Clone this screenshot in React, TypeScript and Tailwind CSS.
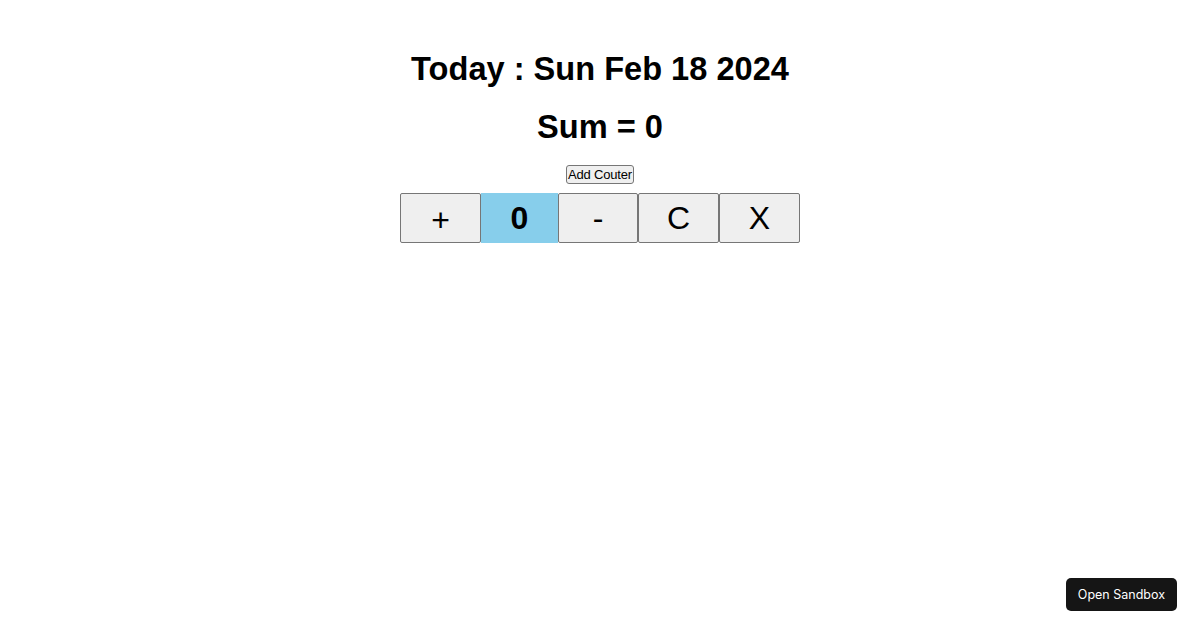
import React, { useState } from 'react';

const cellBtn =
  'h-[50px] bg-[#efefef] border border-[#767676] rounded-[2px] text-[32px] leading-none text-black flex items-center justify-center';

const App: React.FC = () => {
  const [count, setCount] = useState(0);

  return (
    <div className="relative w-[1200px] h-[630px] bg-white font-['Liberation_Sans',Arial,sans-serif] text-black">
      <div className="flex flex-col items-center pt-[50px]">
        <h1 className="text-[32.6px] leading-[37px] font-bold">Today : Sun Feb 18 2024</h1>
        <h1 className="mt-[21px] text-[32.6px] leading-[37px] font-bold">Sum = {count}</h1>
        <button className="mt-[20px] h-[19px] px-[1px] bg-[#efefef] border border-[#767676] rounded-[3px] text-[13px] leading-none tracking-[-0.2px]">
          Add Couter
        </button>
        <div className="mt-[9px] flex">
          <button className={`${cellBtn} w-[81px] pt-[4px]`} onClick={() => setCount(c => c + 1)}>
            +
          </button>
          <span className="w-[77px] h-[50px] bg-[#87ceeb] flex items-center justify-center text-[32px] font-bold leading-none">
            {count}
          </span>
          <button className={`${cellBtn} w-[80px]`} onClick={() => setCount(c => c - 1)}>
            -
          </button>
          <button className={`${cellBtn} w-[81px]`} onClick={() => setCount(0)}>
            C
          </button>
          <button className={`${cellBtn} w-[81px]`}>X</button>
        </div>
      </div>

      <button className="absolute right-[23px] bottom-[19px] h-[33px] px-[12px] pt-[1px] rounded-[5px] bg-[#151515] text-white text-[12.5px] font-['Inter',sans-serif] flex items-center">
        Open Sandbox
      </button>
    </div>
  );
};

export default App;
